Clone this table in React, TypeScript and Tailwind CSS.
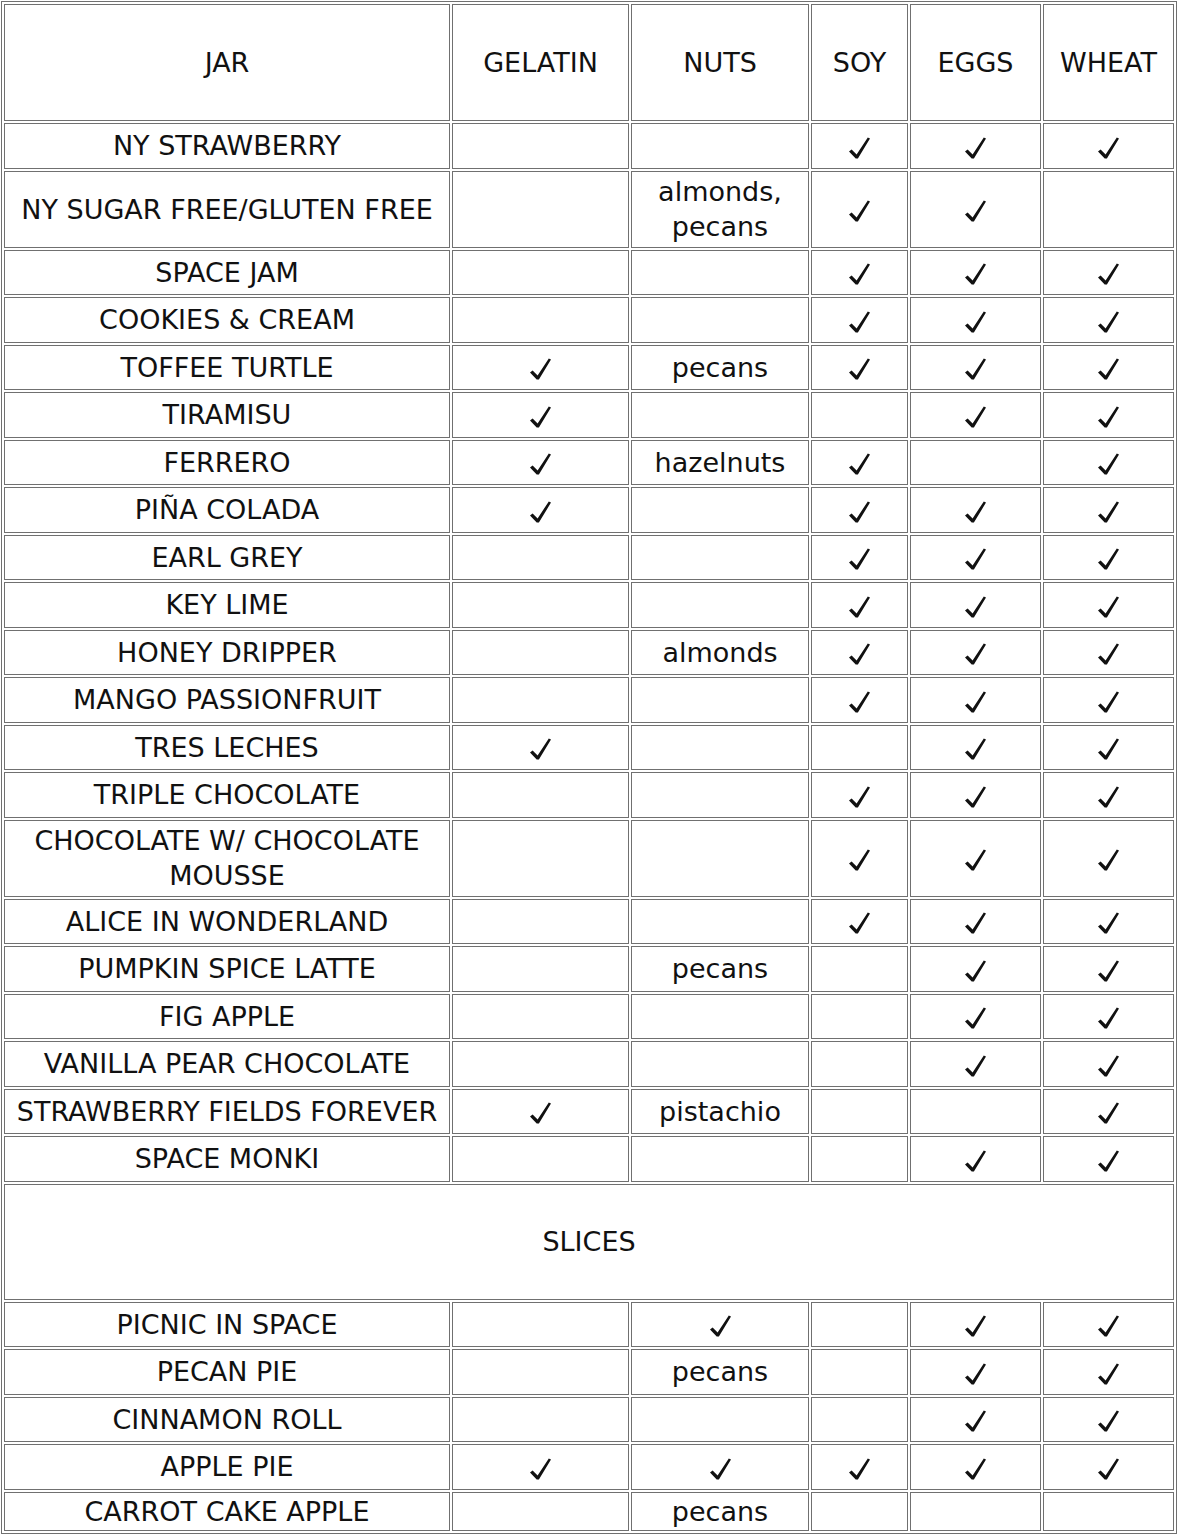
type Cell = boolean | string

type Row = {
  name: string
  cells: Cell[]
  tall?: boolean
  short?: boolean
}

const jars: Row[] = [
  { name: 'NY STRAWBERRY', cells: [false, false, true, true, true] },
  { name: 'NY SUGAR FREE/GLUTEN FREE', cells: [false, 'almonds, pecans', true, true, false], tall: true },
  { name: 'SPACE JAM', cells: [false, false, true, true, true] },
  { name: 'COOKIES & CREAM', cells: [false, false, true, true, true] },
  { name: 'TOFFEE TURTLE', cells: [true, 'pecans', true, true, true] },
  { name: 'TIRAMISU', cells: [true, false, false, true, true] },
  { name: 'FERRERO', cells: [true, 'hazelnuts', true, false, true] },
  { name: 'PIÑA COLADA', cells: [true, false, true, true, true] },
  { name: 'EARL GREY', cells: [false, false, true, true, true] },
  { name: 'KEY LIME', cells: [false, false, true, true, true] },
  { name: 'HONEY DRIPPER', cells: [false, 'almonds', true, true, true] },
  { name: 'MANGO PASSIONFRUIT', cells: [false, false, true, true, true] },
  { name: 'TRES LECHES', cells: [true, false, false, true, true] },
  { name: 'TRIPLE CHOCOLATE', cells: [false, false, true, true, true] },
  { name: 'CHOCOLATE W/ CHOCOLATE MOUSSE', cells: [false, false, true, true, true], tall: true },
  { name: 'ALICE IN WONDERLAND', cells: [false, false, true, true, true] },
  { name: 'PUMPKIN SPICE LATTE', cells: [false, 'pecans', false, true, true] },
  { name: 'FIG APPLE', cells: [false, false, false, true, true] },
  { name: 'VANILLA PEAR CHOCOLATE', cells: [false, false, false, true, true] },
  { name: 'STRAWBERRY FIELDS FOREVER', cells: [true, 'pistachio', false, false, true] },
  { name: 'SPACE MONKI', cells: [false, false, false, true, true] },
]

const slices: Row[] = [
  { name: 'PICNIC IN SPACE', cells: [false, true, false, true, true] },
  { name: 'PECAN PIE', cells: [false, 'pecans', false, true, true] },
  { name: 'CINNAMON ROLL', cells: [false, false, false, true, true] },
  { name: 'APPLE PIE', cells: [true, true, true, true, true] },
  { name: 'CARROT CAKE APPLE', cells: [false, 'pecans', false, false, false], short: true },
]

const headers = ['JAR', 'GELATIN', 'NUTS', 'SOY', 'EGGS', 'WHEAT']

function Check() {
  return (
    <svg width="21" height="22" viewBox="0 0 21 22" className="inline-block align-middle">
      <path d="M0 14.4 L2.6 12.4 L7.6 17.4 L18.8 0.4 L21 1.6 L8.9 21.6 L6.7 21.6 Z" fill="#111" />
    </svg>
  )
}

function Td({ value }: { value: Cell }) {
  return (
    <td className="border border-[#707070] p-0 text-center align-middle">
      {value === true ? <Check /> : value === false ? null : value}
    </td>
  )
}

function DataRow({ row }: { row: Row }) {
  return (
    <tr className={row.tall ? 'h-[77px]' : row.short ? 'h-[39px]' : 'h-[45.5px]'}>
      <td className="border border-[#707070] px-[4px] py-0 text-center align-middle">{row.name}</td>
      {row.cells.map((c, i) => (
        <Td key={i} value={c} />
      ))}
    </tr>
  )
}

export default function App() {
  return (
    <div className="min-h-screen bg-white pl-[1px] pt-[1px]">
      <table
        className="w-[1176px] table-fixed border-separate border-spacing-[2px] border border-[#707070] text-[27px] leading-[35px] text-[#111]"
        style={{ fontFamily: '"DejaVu Sans", "Noto Sans", sans-serif' }}
      >
        <colgroup>
          <col className="w-[446px]" />
          <col className="w-[177px]" />
          <col className="w-[178px]" />
          <col className="w-[97px]" />
          <col className="w-[131px]" />
          <col className="w-[131px]" />
        </colgroup>
        <tbody>
          <tr className="h-[117px]">
            {headers.map(h => (
              <td key={h} className="border border-[#707070] p-0 text-center align-middle">
                {h}
              </td>
            ))}
          </tr>
          {jars.map(r => (
            <DataRow key={r.name} row={r} />
          ))}
          <tr className="h-[116px]">
            <td colSpan={6} className="border border-[#707070] p-0 text-center align-middle">
              SLICES
            </td>
          </tr>
          {slices.map(r => (
            <DataRow key={r.name} row={r} />
          ))}
        </tbody>
      </table>
    </div>
  )
}
